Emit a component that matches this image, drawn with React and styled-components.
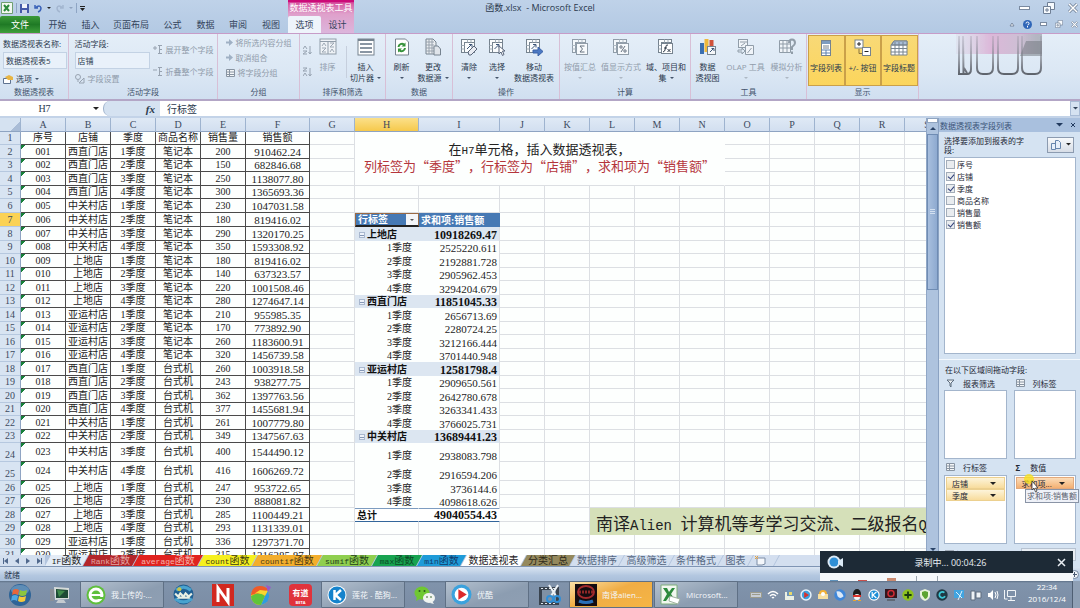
import React from 'react';
import styled, { createGlobalStyle, css } from 'styled-components';

const GlobalStyle = createGlobalStyle`
  * { box-sizing: border-box; }
  body {
    margin: 0;
    overflow: hidden;
    font-family: "Open Sans", "Noto Sans CJK SC", sans-serif;
    font-size: 8px;
    color: #2b3a4e;
  }
  button, input {
    font: inherit;
    color: inherit;
    padding: 0;
    margin: 0;
    border: 0;
    background: none;
  }
  svg { display: block; flex: none; }
`;

const songti = css`
  font-family: "Liberation Serif", "Noto Sans CJK SC", serif;
`;

const Page = styled.div`
  display: flex;
  flex-direction: column;
  height: 100vh;
  background: #d5e2f1;
`;

/* ---------- title bar and tabs ---------- */

const Header = styled.header`
  background: linear-gradient(#bfd2e9, #b3c9e3);
`;

const TopRow = styled.div`
  display: grid;
  grid-template-columns: 1fr auto 1fr;
  height: 33px;
`;

const TopLeft = styled.div`
  display: flex;
  flex-direction: column;
`;

const QuickBar = styled.div`
  display: flex;
  align-items: center;
  height: 16px;
  gap: 5px;
  padding-left: 1px;
`;

const QuickLine = styled.i`
  width: 1px;
  height: 10px;
  margin: 0 -2px;
  background: #8ea5c4;
`;

const TabRow = styled.nav`
  display: flex;
  height: 17px;
`;

const FileTab = styled.button`
  width: 40px;
  background: linear-gradient(#3c9a3a, #1f7a25 50%, #3f9f3c);
  border-radius: 2px 2px 0 0;
  color: #fff;
  font-size: 9px;
`;

const RibbonTab = styled.button`
  width: ${(p) => p.$w}px;
  font-size: 9px;
  line-height: 16px;
  color: #33435a;
`;

const ToolTabs = styled.div`
  display: flex;
  flex-direction: column;
  width: 66px;
  background: linear-gradient(#cf1280 0, #d65fa6 4px, #dfa0cb 14px, #dcb6dc);
  color: #fff;
  text-align: center;
`;

const ToolTitle = styled.div`
  height: 16px;
  border-top: 2px solid #cc0a78;
  line-height: 12px;
  font-size: 9px;
  white-space: nowrap;
`;

const ToolTab = styled(RibbonTab)`
  background: ${(p) => (p.$active ? '#eef4fb' : 'none')};
  border-radius: 2px 2px 0 0;
`;

const DocTitle = styled.h1`
  margin: 0;
  font-size: 9px;
  font-weight: 400;
  line-height: 16px;
`;

const TopRight = styled.div`
  display: flex;
  flex-direction: column;
  align-items: flex-end;
  padding-right: 2px;
`;

const WinRow = styled.div`
  display: flex;
  align-items: center;
  height: 16px;
  gap: ${(p) => p.$gap}px;
`;

/* ---------- ribbon ---------- */

const Ribbon = styled.div`
  display: flex;
  height: 68px;
  border-top: 1px solid #c79cc8;
  border-bottom: 2px solid #b3a6c6;
  background: linear-gradient(#e4eef8, #dbe7f4 60%, #d0dff0);
`;

const Group = styled.section`
  display: flex;
  flex-direction: column;
  flex: none;
  width: ${(p) => p.$w}px;
  border-right: 1px solid #d8bfd6;
`;

const GroupBody = styled.div`
  display: flex;
  flex: 1;
  justify-content: center;
  align-items: stretch;
  gap: ${(p) => p.$gap || 0}px;
`;

const GroupLabel = styled.div`
  height: 13px;
  line-height: 11px;
  text-align: center;
  color: #43546c;
`;

const BigButton = styled.button`
  display: flex;
  flex-direction: column;
  align-items: center;
  justify-content: flex-start;
  flex: none;
  width: ${(p) => p.$w}px;
  padding-top: 4px;
  height: 51px;
  line-height: 11px;
  white-space: nowrap;
  color: ${(p) => (p.$dim ? '#909cab' : '#2b3a4e')};
`;

const BigIcon = styled.span`
  margin-bottom: 5px;
  opacity: ${(p) => (p.$dim ? 0.75 : 1)};
`;

const BigLine = styled.span`
  display: flex;
  align-items: center;
  justify-content: center;
  gap: 3px;
  height: 11px;
`;

const ToggleButton = styled(BigButton)`
  margin-top: 1px;
  padding-top: 3px;
  background: linear-gradient(#f8d977, #fbd55c);
  border: 1px solid #caa049;
`;

const FieldColumn = styled.div`
  display: flex;
  flex-direction: column;
  width: ${(p) => p.$w}px;
  padding-left: 2px;
  padding-top: 3px;
`;

const FieldLabel = styled.label`
  line-height: 13px;
  white-space: nowrap;
`;

const FieldInput = styled.input`
  height: 17px;
  width: 100%;
  margin: 2px 0 3px;
  padding-left: 2px;
  background: #e9f1fa;
  border: 1px solid #c3d2e4;
`;

const SmallButton = styled.button`
  display: flex;
  align-items: center;
  gap: 3px;
  height: 13px;
  white-space: nowrap;
  color: ${(p) => (p.$dim ? '#909cab' : '#2b3a4e')};
`;

const SmallStack = styled.div`
  display: flex;
  flex-direction: column;
  padding-top: ${(p) => p.$top}px;
  gap: ${(p) => p.$gap}px;
`;

const Divider = styled.div`
  width: 1px;
  margin: 12px 2px 8px;
  background: #c6cfdd;
`;

const Smudge = styled.div`
  flex: 1;
  display: flex;
  justify-content: flex-end;
  padding-right: 34px;
`;

/* ---------- formula bar ---------- */

const FormulaBar = styled.div`
  display: flex;
  align-items: center;
  height: 17px;
  border-bottom: 2px solid #c3d3e8;
  background: #fff;
  ${songti}
  font-size: 10px;
`;

const NameBox = styled.div`
  display: flex;
  align-items: center;
  width: 103px;
  padding-right: 4px;
`;

const NameInput = styled.input`
  flex: 1;
  min-width: 0;
  text-align: center;
  padding-right: 4px;
`;

const FxArea = styled.div`
  display: flex;
  align-items: center;
  justify-content: flex-end;
  width: 57px;
  height: 15px;
  padding-right: 5px;
  border-left: 1px solid #9fb2cb;
  border-radius: 7px 0 0 7px;
  background: #d5e2f1;
  font-size: 11px;
  font-style: italic;
  font-weight: 700;
`;

const FormulaInput = styled.input`
  flex: 1;
  padding-left: 7px;
`;

const ExpandButton = styled.button`
  display: flex;
  align-items: center;
  justify-content: center;
  width: 10px;
  height: 15px;
  background: #d5e2f1;
  border: 1px solid #a9bcd6;
`;

/* ---------- sheet ---------- */

const Main = styled.main`
  display: flex;
  flex: 1;
  min-height: 0;
`;

const Book = styled.div`
  display: flex;
  flex-direction: column;
  flex: 1;
  min-width: 0;
`;

const SheetArea = styled.div`
  display: flex;
  flex: 1;
  min-height: 0;
`;

const SheetView = styled.div`
  flex: 1;
  min-width: 0;
  overflow: hidden;
  background: #fdfffe;
`;

const Grid = styled.table`
  width: 950px;
  table-layout: fixed;
  border-collapse: separate;
  border-spacing: 0;
  ${songti}
  font-size: 10px;
  line-height: 12px;
  color: #222;
  text-spacing-trim: space-all;
`;

const Row = styled.tr`
  height: ${(p) => p.$h}px;
`;

const ColHead = styled.th`
  padding: 0;
  height: 14px;
  font-weight: 400;
  color: #3c4a5e;
  border-right: 1px solid #9eb3cf;
  border-bottom: 1px solid #8ea4c2;
  background: ${(p) => (p.$on ? 'linear-gradient(#fbe08a, #f6c94c)' : 'linear-gradient(#dfe9f5, #d2dff0)')};
`;

const CornerHead = styled(ColHead)`
  background: linear-gradient(135deg, transparent 70%, #a9bcd6 70%) #d5e2f1;
`;

const RowHead = styled.th`
  padding: 0;
  font-weight: 400;
  vertical-align: bottom;
  color: #3c4a5e;
  border-right: 1px solid #8ea4c2;
  border-bottom: 1px solid #b6c8df;
  background: ${(p) => (p.$on ? '#fbd255' : '#d8e4f2')};
`;

const Cell = styled.td`
  padding: 0;
  border-right: 1px solid #dcdfe3;
  border-bottom: 1px solid #dcdfe3;
`;

const DataCell = styled.td`
  padding: 0;
  text-align: center;
  white-space: nowrap;
  font-size: ${(p) => (p.$money ? 11 : 10)}px;
  border-right: 1px solid #4a4a4a;
  border-bottom: 1px solid #4a4a4a;
  ${(p) => p.$flag && 'background: linear-gradient(135deg, #16803a 3px, transparent 3px);'}
`;

const PivotCell = styled.td`
  padding: 0 ${(p) => (p.$num ? 2 : 6)}px 0 2px;
  vertical-align: bottom;
  white-space: nowrap;
  text-align: ${(p) => (p.$num || p.$sub ? 'right' : 'left')};
  font-size: ${(p) => (p.$num ? 11 : 10)}px;
  border-right: 1px solid ${(p) => (p.$num ? '#dcdfe3' : 'transparent')};
  ${(p) => p.$bold && css`
    font-weight: 700;
    font-size: ${p.$num ? 12 : 10}px;
    color: #111;
    background: #dce6f1;
  `}
  ${(p) => p.$total && css`
    background: #fff;
    border-top: 1px solid #7d9cc0;
    border-bottom: 1px solid #33669b;
    border-right-color: transparent;
    line-height: 11px;
  `}
`;

const PivotHead = styled.td`
  padding: 0 0 0 2px;
  color: #fff;
  font-weight: 700;
  font-size: 10px;
  white-space: nowrap;
  background: #4679b4;
  border: ${(p) => (p.$active ? '1px solid #9a6a44' : '0')};
  border-bottom: ${(p) => (p.$active ? '2px solid #222' : '0')};
  line-height: 11px;
`;

const HeadInner = styled.div`
  display: flex;
  align-items: center;
  justify-content: space-between;
  height: 11px;
`;

const FilterButton = styled.button`
  display: flex;
  align-items: center;
  justify-content: center;
  width: 12px;
  height: 11px;
  background: #f4f6f9;
`;

const Collapse = styled.button`
  display: inline-flex;
  align-items: center;
  justify-content: center;
  width: 6px;
  height: 6px;
  margin: 0 2px 1px 2px;
  border: 1px solid #a9b8cf;
  vertical-align: middle;
  background: linear-gradient(#8497b5, #8497b5) center / 4px 1px no-repeat #eef3fa;
`;

const NoteCell = styled.td`
  padding: 0 0 4px;
  text-align: center;
  font-size: 13px;
  line-height: 17px;
  border-right: 1px solid #fdfffe;
  border-bottom: 1px solid #dcdfe3;
`;

const NoteLine = styled.div`
  color: ${(p) => (p.$red ? '#b5363c' : '#222')};
  font-family: "Noto Sans CJK SC", sans-serif;
`;

const BannerCell = styled.td`
  padding: 0 0 0 6px;
  vertical-align: bottom;
  background: #d5e0b9;
  font-size: 17px;
  line-height: 20px;
  white-space: nowrap;
`;

const Half = styled.span`
  font-family: "Liberation Mono", monospace;
  font-size: ${(p) => p.$size}px;
  line-height: 0;
`;

/* ---------- scroll bar ---------- */

const ScrollBar = styled.div`
  display: flex;
  flex-direction: column;
  width: 12px;
  background: #aec3de;
  border-left: 1px solid #90a7c6;
`;

const SplitBox = styled.div`
  height: 5px;
  background: #fff;
  border: 1px solid #8fa4c0;
`;

const ScrollButton = styled.button`
  display: flex;
  align-items: center;
  justify-content: center;
  height: 11px;
`;

const Thumb = styled.div`
  display: flex;
  align-items: center;
  justify-content: center;
  flex: 0 0 38%;
  border: 1px solid #6f8cb3;
  background: linear-gradient(90deg, #a8bfde, #8eaad0);
`;

const Track = styled.div`
  display: flex;
  flex-direction: column;
  flex: 1;
`;

/* ---------- sheet tabs and status ---------- */

const SheetTabs = styled.div`
  display: flex;
  height: 12px;
  border-bottom: 1px solid #7f95b4;
  background: #b3c5de;
  ${songti}
  font-size: 10px;
`;

const SheetNav = styled.div`
  display: flex;
  align-items: center;
  justify-content: space-around;
  width: 45px;
  background: #d3dfef;
`;

const SheetTab = styled.button`
  flex: none;
  width: ${(p) => p.$w + 5}px;
  margin-right: -5px;
  line-height: 11px;
  white-space: nowrap;
  color: ${(p) => p.$fg || '#56677f'};
  background: ${(p) => p.$bg};
  clip-path: polygon(6px 0, 100% 0, calc(100% - 6px) 100%, 0 100%);
`;

const TabSpace = styled.div`
  flex: 1;
  background: #d3dfef;
  clip-path: polygon(6px 0, 100% 0, 100% 100%, 0 100%);
`;

const StatusBar = styled.footer`
  display: flex;
  align-items: center;
  justify-content: space-between;
  height: 14px;
  padding: 0 1px 0 4px;
  background: linear-gradient(#dae5f2, #b3c7e0 60%, #a9bfda);
`;

/* ---------- field pane ---------- */

const Pane = styled.aside`
  display: flex;
  flex-direction: column;
  width: 142px;
  overflow: hidden;
  border-left: 1px solid #8ba2c2;
  background: #d5e3f2;
  color: #1e2835;
`;

const PaneTitle = styled.div`
  display: flex;
  align-items: center;
  gap: 7px;
  height: 14px;
  flex: none;
  padding: 0 4px 0 1px;
  background: #a9c0de;
  color: #3b5478;
  span { flex: 1; }
`;

const PaneHead = styled.div`
  display: flex;
  justify-content: space-between;
  align-items: center;
  height: 25px;
  flex: none;
  padding: 0 6px 0 5px;
  line-height: 9px;
  p { margin: 0; width: 86px; }
`;

const LayoutButton = styled.button`
  display: flex;
  align-items: center;
  justify-content: space-around;
  width: 27px;
  height: 16px;
  border: 1px solid #8c9bb0;
  background: linear-gradient(#f7f9fb, #d7dde6);
`;

const FieldList = styled.div`
  display: flex;
  flex-direction: column;
  height: 197px;
  flex: none;
  margin: 0 4px 0 5px;
  border: 1px solid #a3b5cc;
  background: #fff;
`;

const CheckLabel = styled.label`
  display: flex;
  align-items: center;
  gap: 2px;
  height: 12px;
  padding-left: 1px;
`;

const Check = styled.input`
  appearance: none;
  width: 9px;
  height: 9px;
  border: 1px solid #a3adb9;
  background: #e9ecef;
  &:checked::after {
    content: "";
    display: block;
    width: 3px;
    height: 5px;
    margin-left: 2px;
    border: solid #2f3f7a;
    border-width: 0 1px 1px 0;
    transform: rotate(40deg);
  }
`;

const AreaHint = styled.p`
  margin: 5px 0 0;
  padding: 4px 0 0 6px;
  line-height: 12px;
  border-top: 1px solid #f3f8fd;
`;

const Areas = styled.div`
  display: grid;
  grid-template-columns: 1fr 1fr;
  column-gap: 7px;
  padding: 0 4px 0 5px;
`;

const AreaTitle = styled.div`
  display: flex;
  align-items: center;
  gap: 8px;
  height: ${(p) => p.$h}px;
  padding-left: 2px;
`;

const AreaBox = styled.div`
  height: 69px;
  padding: 1px;
  border: 1px solid #a3b5cc;
  background: #fff;
`;

const Pill = styled.button`
  display: flex;
  align-items: center;
  justify-content: space-between;
  width: 100%;
  height: 12px;
  padding: 0 8px 0 5px;
  border: 1px solid ${(p) => (p.$hot ? '#e3a97c' : '#ecd08f')};
  background: ${(p) => (p.$hot ? 'linear-gradient(#fbdcb8, #f4b072)' : 'linear-gradient(#fdf4da, #f8dc9c)')};
`;

const PaneFoot = styled.div`
  display: flex;
  align-items: center;
  justify-content: space-between;
  padding: 4px 4px 0 5px;
`;

const UpdateButton = styled.button`
  width: 55px;
  height: 13px;
  border: 1px solid #b7c3d2;
  background: #e9eef4;
  color: #9aa6b4;
`;

const Tip = styled.div`
  position: fixed;
  right: 1px;
  top: 489px;
  padding: 0 1px;
  border: 1px solid #8a94a6;
  background: #eef1f8;
  color: #5c6270;
  line-height: 12px;
`;

const Pointer = styled.div`
  position: fixed;
  right: 41px;
  top: 473px;
`;

/* ---------- recorder window ---------- */

const Recorder = styled.div`
  position: fixed;
  right: 7px;
  bottom: 27px;
  width: 253px;
  background: #f4f7fa;
`;

const RecorderBar = styled.div`
  display: flex;
  align-items: center;
  justify-content: space-between;
  height: 22px;
  padding: 0 7px;
  background: #1d2a36;
  color: #e8edf2;
  font-size: 9px;
`;

const RecorderTools = styled.div`
  display: flex;
  align-items: flex-end;
  gap: 20px;
  height: 8px;
  padding-left: 10px;
`;

const ToolBit = styled.i`
  width: ${(p) => p.$w}px;
  height: ${(p) => p.$h}px;
  background: ${(p) => p.$c};
`;

/* ---------- task bar ---------- */

const TaskBar = styled.div`
  display: flex;
  height: 27px;
  background: linear-gradient(#5d7087 0, #8093ab 2px, #7b8da5);
`;

const Pin = styled.button`
  display: flex;
  align-items: center;
  justify-content: center;
  flex: none;
  width: ${(p) => p.$w}px;
`;

const Task = styled.button`
  display: flex;
  align-items: center;
  gap: 5px;
  flex: none;
  width: 84px;
  margin-right: ${(p) => p.$mr || 0}px;
  padding-left: 5px;
  color: #f4f7fa;
  white-space: nowrap;
  border: 1px solid #5f7085;
  border-radius: 1px;
  background: ${(p) => (p.$hot ? 'linear-gradient(160deg, #fbe0a6, #f0ad45 45%, #f5b545)' : 'linear-gradient(160deg, #b4c1cf, #8c9db1 60%, #8f9fb3)')};
`;

const Tray = styled.div`
  display: flex;
  align-items: center;
  justify-content: flex-end;
  flex: 1;
  gap: 5px;
  padding-right: 6px;
`;

const Clock = styled.time`
  width: 50px;
  text-align: center;
  font-size: 8px;
  line-height: 12px;
  color: #fff;
`;

const ShowDesktop = styled.button`
  width: 8px;
  border-left: 1px solid #4f5f73;
  background: #8fa0b5;
`;

/* ---------- drawings ---------- */

const Caret = ({ size = 6, color = '#222' }) => (
  <svg width={size} height={size / 2} viewBox="0 0 6 3"><path d="M0 0h6L3 3z" fill={color} /></svg>
);

const Glyph = ({ children, s = 18 }) => (
  <svg width={s} height={s} viewBox="0 0 18 18" fill="none" stroke="#76838f" strokeWidth="1">{children}</svg>
);

const PivotBase = () => (
  <>
    <rect x="1.5" y="1.5" width="13" height="13" fill="#fafcfd" />
    <path d="M4 4.500h10M4.500 4v10" stroke="#76838f" />
    <path d="M7.500 1.500v3M1.500 7.500h3M11 1.500v3M1.500 11h3" stroke="#a3aeb9" />
  </>
);

const icons = {
  sort: (
    <Glyph>
      <rect x="1" y="1" width="16" height="15" fill="#f4f6f8" />
      <path d="M1 3.500h16M9 4v12" />
      <path d="M3 8l2-3 2 3M3 10h4l-4 4h4M11 5h4l-4 4h4M11 14l2-3 2 3" stroke="#88939f" />
    </Glyph>
  ),
  slicer: (
    <Glyph>
      <rect x="1" y="1" width="16" height="16" fill="#fff" />
      <path d="M1 2h16" strokeWidth="2" />
      <path d="M3 6h12M3 10h12M3 14h12" stroke="#8a96a3" strokeWidth="2" />
    </Glyph>
  ),
  refresh: (
    <Glyph>
      <path d="M2.500 1h10l3 3v13h-13z" fill="#fff" />
      <path d="M5.500 9a3.500 3.500 0 0 1 5.500-2.500M12 10a3.500 3.500 0 0 1-5.500 2.500" stroke="#35923a" strokeWidth="2" />
      <path d="M12.500 4.500v4h-4zM5 14.500v-4h4z" fill="#35923a" stroke="none" />
    </Glyph>
  ),
  source: (
    <Glyph>
      <path d="M2 1h7l3 3v12H2z" fill="#eceff2" />
      <path d="M2 4h8M2 7h8M2 10h8M2 13h8M5 1v15M8 1v15" stroke="#98a2ad" />
      <path d="M10 8h4l2.500 3v6H10z" fill="#dfe4ea" />
    </Glyph>
  ),
  clear: (
    <Glyph>
      <PivotBase />
      <path d="M7 11l4-4M9 6.500h3v3" stroke="#3c5578" />
      <path d="M8 14l6-6 3 3-6 6H9z" fill="#e8ebf2" stroke="#59657a" />
    </Glyph>
  ),
  select: (
    <Glyph>
      <PivotBase />
      <path d="M6.500 11l4-4M8 6.500h3v3" stroke="#3c5578" />
      <path d="M11 8v8l2-2 1.500 3.500 1.500-1L14.500 13H17z" fill="#fff" stroke="#59657a" />
    </Glyph>
  ),
  move: (
    <Glyph>
      <PivotBase />
      <path d="M6.500 11l4-4M8 6.500h3v3" stroke="#3c5578" />
      <path d="M8 12h5V9l5 4.500-5 4.500v-3H8z" fill="#4c79c4" stroke="#3a62a6" />
    </Glyph>
  ),
  sum: (
    <Glyph>
      <PivotBase />
      <rect x="5.500" y="5.500" width="11" height="11" fill="#fff" />
      <path d="M13.500 8H9l2.500 3L9 14h4.500" stroke="#3d4856" />
    </Glyph>
  ),
  percent: (
    <Glyph>
      <PivotBase />
      <rect x="5.500" y="5.500" width="11" height="11" fill="#fff" />
      <path d="M13 8l-4 6" stroke="#3d4856" />
      <circle cx="9" cy="9" r="1.200" stroke="#3d4856" />
      <circle cx="13" cy="13" r="1.200" stroke="#3d4856" />
    </Glyph>
  ),
  fields: (
    <Glyph>
      <PivotBase />
      <rect x="4.500" y="5.500" width="11" height="10" fill="#fff" />
      <path d="M6 14q2 0 2.500-4T11 7M7 10h3M10.500 11l3 3M13.500 11l-3 3" stroke="#2f3a48" />
    </Glyph>
  ),
  chart: (
    <Glyph>
      <rect x="1" y="5" width="4" height="11" fill="#3b6fb0" stroke="none" />
      <rect x="5.500" y="1" width="4" height="13" fill="#eeb83c" stroke="none" />
      <rect x="10.500" y="2" width="4" height="9" fill="#d0513a" stroke="none" />
      <rect x="8.500" y="8.500" width="8" height="8" fill="#f6f8fa" />
      <path d="M11 14l3-3M12.500 10.500H15V13" stroke="#3c5578" />
    </Glyph>
  ),
  olap: (
    <Glyph>
      <rect x="1.500" y="1.500" width="9" height="8" fill="#f6f8fa" />
      <path d="M3 4h7M4 8l4-3" />
      <path d="M8.500 7.500h8v9h-8z" fill="#f6f8fa" />
      <path d="M1 12h4v-2l3 3-3 3v-2H1zM10.500 15l4-5" />
    </Glyph>
  ),
  whatif: (
    <Glyph>
      <path d="M1.500 2.500h11v12h-11z" fill="#f6f8fa" />
      <path d="M1.500 6h11M1.500 10h11M5 2.500v12M9 2.500v12" />
      <path d="M11 5q0-3.500 3-3.500T17 5q0 2-3 4v3M14 13.500v2.500" strokeWidth="2" />
    </Glyph>
  ),
  list: (
    <Glyph>
      <rect x="4.500" y="1.500" width="9" height="15" fill="#fff" />
      <rect x="5" y="2" width="8" height="3" fill="#7d9cc0" stroke="none" />
      <path d="M6 7h6M6 9h6" />
      <path d="M4.500 11h9M9 11v6M4.500 14h9" stroke="#5c81b0" />
    </Glyph>
  ),
  plusminus: (
    <Glyph>
      <rect x="1" y="1" width="8" height="8" fill="#fff" />
      <path d="M3 5h4M5 3v4" stroke="#222" />
      <rect x="8.500" y="8.500" width="8" height="8" fill="#fff" />
      <path d="M10.500 12.500h4" stroke="#222" />
      <path d="M5 10v4.500H8" stroke="#8a7440" />
    </Glyph>
  ),
  headers: (
    <Glyph>
      <path d="M1 6l3-4h13v14H1z" fill="#fff" />
      <path d="M4 2h13v4H1.500z" fill="#a9bdd6" />
      <path d="M1 6h16M1 9.500h16M1 13h16M5 3v13M9 3v13M13 3v13" />
    </Glyph>
  ),
  expand: (
    <svg width="10" height="9" viewBox="0 0 10 9" fill="none" stroke="#98a3b1"><path d="M0 3h4M2 1v4M5 .5h4M6.500.5v8M5 8.500h4M7 4.500h2" /></svg>
  ),
  fold: (
    <svg width="10" height="9" viewBox="0 0 10 9" fill="none" stroke="#98a3b1"><path d="M0 3h4M5 .5h4M6.500.5v8M5 8.500h4M7 4.500h2" /></svg>
  ),
  setting: (
    <svg width="10" height="10" viewBox="0 0 10 10" fill="none" stroke="#98a3b1"><circle cx="3" cy="3" r="2.500" /><path d="M4 9h5V4zM2 7h2" /></svg>
  ),
  arrow: (
    <svg width="7" height="7" viewBox="0 0 7 7" fill="#9fb0c4"><path d="M0 2.500h3V0l4 3.500L3 7V4.500H0z" /></svg>
  ),
  card: (
    <svg width="10" height="10" viewBox="0 0 10 10"><path d="M.5 4.500h7v5h-7z" fill="#fff" stroke="#5f7390" /><path d="M2 3l4-2 4 2v3H5z" fill="#e8b543" /></svg>
  ),
  table: (
    <svg width="9" height="8" viewBox="0 0 9 8" fill="#f4f6f8" stroke="#8894a2"><path d="M.5.500h8v7h-8zM.5 3h8M.5 5.500h8M3.500.500v7" /></svg>
  ),
};

const Restore = ({ s }) => (
  <svg width={s} height={s} viewBox="0 0 12 12" fill="#f7fafd" stroke="#6f7f95"><path d="M4.500.500h7v7h-7z" /><path d="M.5 4.500h7v7h-7zM3 7h2v2H3z" /></svg>
);

const Close = ({ s, color = '#6f7f95' }) => (
  <svg width={s} height={s} viewBox="0 0 10 10"><path d="M1 1l8 8M9 1L1 9" stroke={color} strokeWidth="3" /><path d="M1 1l8 8M9 1L1 9" stroke="#fff" strokeWidth="1.500" /></svg>
);

const Dash = ({ w }) => (
  <svg width={w} height="4" viewBox={`0 0 ${w} 4`}><rect x=".5" y=".5" width={w - 1} height="3" fill="#fff" stroke="#7a8aa0" /></svg>
);

const SortPair = ({ up }) => (
  <svg width="9" height="10" viewBox="0 0 9 10" fill="none" stroke="#97a3b1">
    <path d={up ? 'M0 4l2-3 2 3M0 6h4L0 9h4' : 'M0 1h4L0 4h4M0 9l2-3 2 3'} />
    <path d="M7 1v8M5.500 7L7 9l1.500-2" />
  </svg>
);

const Ball = ({ s = 18, fill, children }) => (
  <svg width={s} height={s} viewBox="0 0 20 20"><circle cx="10" cy="10" r="9.500" fill={fill} />{children}</svg>
);

/* ---------- data ---------- */

const shops = ['西直门店', '中关村店', '上地店', '亚运村店'];
const amounts = [
  [200, '910462.24'], [150, '682846.68'], [250, '1138077.80'], [300, '1365693.36'],
  [230, '1047031.58'], [180, '819416.02'], [290, '1320170.25'], [350, '1593308.92'],
  [180, '819416.02'], [140, '637323.57'], [220, '1001508.46'], [280, '1274647.14'],
  [210, '955985.35'], [170, '773892.90'], [260, '1183600.91'], [320, '1456739.58'],
  [260, '1003918.58'], [243, '938277.75'], [362, '1397763.56'], [377, '1455681.94'],
  [261, '1007779.80'], [349, '1347567.63'], [400, '1544490.12'], [416, '1606269.72'],
  [247, '953722.65'], [230, '888081.82'], [285, '1100449.21'], [293, '1131339.01'],
  [336, '1297371.70'], [315, '1216285.87'],
];

const sales = amounts.map(([count, money], i) => [
  String(i + 1).padStart(3, '0'),
  shops[Math.floor(i / 4) % 4],
  `${(i % 4) + 1}季度`,
  i < 16 ? '笔记本' : '台式机',
  count,
  money,
]);

const pivot = [
  ['上地店', '10918269.47', ['2525220.611', '2192881.728', '2905962.453', '3294204.679']],
  ['西直门店', '11851045.33', ['2656713.69', '2280724.25', '3212166.444', '3701440.948']],
  ['亚运村店', '12581798.4', ['2909650.561', '2642780.678', '3263341.433', '3766025.731']],
  ['中关村店', '13689441.23', ['2938083.798', '2916594.206', '3736144.6', '4098618.626']],
];

const pivotRows = pivot.flatMap(([name, total, quarters]) => [
  { label: name, value: total, bold: true },
  ...quarters.map((value, i) => ({ label: `${i + 1}季度`, value })),
]);

const columns = [
  ['A', 45], ['B', 45], ['C', 45], ['D', 45], ['E', 45], ['F', 64], ['G', 45], ['H', 64], ['I', 81],
  ['J', 45], ['K', 45], ['L', 45], ['M', 45], ['N', 45], ['O', 45], ['P', 45], ['Q', 45], ['R', 45], ['S', 45],
];

const sheets = [
  ['IF函数', 38, '#e3ecf6', '#222'],
  ['Rank函数', 50, '#b3262b', '#e3a6a2'],
  ['average函数', 65, '#e0231f', '#f3b3aa'],
  ['count函数', 54, '#f6f01f', '#3a3a14'],
  ['countif函数', 65, '#f3ae2c', '#4a3a14'],
  ['sumif函数', 55, '#8fcf4f', '#23401a'],
  ['max函数', 45, '#17a350', '#0c4a26'],
  ['min函数', 44, '#1d9bd8', '#123a6a'],
  ['数据透视表', 60, '#fff', '#222'],
  ['分类汇总', 49, '#94895d', '#2e2a1a'],
  ['数据排序', 49, '#d3dfef'],
  ['高级筛选', 50, '#d3dfef'],
  ['条件格式', 49, '#d3dfef'],
  ['图表', 30, '#d3dfef'],
];

const Mixed = ({ text, size }) =>
  text.split(/([\x20-\x7f]+)/).map((part, i) =>
    (i % 2 ? <Half key={i} $size={size}>{part}</Half> : part));

const rowHeight = (n) => (n === 24 || n === 25 ? 19 : n % 2 === 0 ? 14 : 13);

const blanks = (n) => Array.from({ length: n }, (_, i) => <Cell key={i} />);

const PivotPart = ({ n }) => {
  if (n === 1) {
    return (
      <NoteCell colSpan={7} rowSpan={4}>
        <NoteLine><Mixed text="在H7单元格，插入数据透视表，" size={11} /></NoteLine>
        <NoteLine $red>列标签为“季度”，行标签为“店铺”，求和项为“销售额”</NoteLine>
      </NoteCell>
    );
  }
  if (n < 5) return null;
  if (n === 7) {
    return (
      <>
        <PivotHead $active>
          <HeadInner>行标签<FilterButton aria-label="筛选"><Caret size={4} color="#555" /></FilterButton></HeadInner>
        </PivotHead>
        <PivotHead>求和项:销售额</PivotHead>
      </>
    );
  }
  if (n > 7 && n < 28) {
    const row = pivotRows[n - 8];
    return (
      <>
        <PivotCell $bold={row.bold} $sub={!row.bold}>
          {row.bold && <Collapse aria-label="折叠" />}
          {row.label}
        </PivotCell>
        <PivotCell $num $bold={row.bold}>{row.value}</PivotCell>
      </>
    );
  }
  if (n === 28) {
    return (
      <>
        <PivotCell $bold $total>总计</PivotCell>
        <PivotCell $num $bold $total>49040554.43</PivotCell>
      </>
    );
  }
  return blanks(2);
};

const RestPart = ({ n }) => {
  if (n < 5) return blanks(5);
  if (n === 28) {
    return (
      <>
        {blanks(2)}
        <BannerCell colSpan={8} rowSpan={2}>
          <Mixed text="南译Alien 计算机等考学习交流、二级报名Q" size={14} />
        </BannerCell>
      </>
    );
  }
  return blanks(n === 29 ? 2 : 10);
};

const Sheet = () => (
  <Grid>
    <colgroup>
      <col style={{ width: 21 }} />
      {columns.map(([name, width]) => <col key={name} style={{ width }} />)}
    </colgroup>
    <thead>
      <Row $h={14}>
        <CornerHead />
        {columns.map(([name]) => <ColHead key={name} scope="col" $on={name === 'H'}>{name}</ColHead>)}
      </Row>
    </thead>
    <tbody>
      {Array.from({ length: 31 }, (_, i) => i + 1).map((n) => {
        const cells = n === 1 ? ['序号', '店铺', '季度', '商品名称', '销售量', '销售额'] : sales[n - 2];
        return (
          <Row key={n} $h={rowHeight(n)}>
            <RowHead scope="row" $on={n === 7}>{n}</RowHead>
            {cells.map((text, c) => (
              <DataCell key={c} $flag={n > 1 && c === 0} $money={n > 1 && c === 5}>{text}</DataCell>
            ))}
            <Cell />
            <PivotPart n={n} />
            <RestPart n={n} />
          </Row>
        );
      })}
    </tbody>
  </Grid>
);

const Big = ({ icon, w, lines, dim, toggle, menu }) => {
  const Button = toggle ? ToggleButton : BigButton;
  const caret = <Caret size={4} color={dim ? '#aeb8c4' : '#44546a'} />;
  return (
    <Button $w={w} $dim={dim}>
      <BigIcon $dim={dim}>{icons[icon]}</BigIcon>
      {lines.map((line, i) => (
        <BigLine key={line}>{line}{menu && i === 1 && caret}</BigLine>
      ))}
      {menu && lines.length === 1 && <BigLine>{caret}</BigLine>}
    </Button>
  );
};

const RibbonGroup = ({ title, w, gap, children }) => (
  <Group $w={w}>
    <GroupBody $gap={gap}>{children}</GroupBody>
    <GroupLabel>{title}</GroupLabel>
  </Group>
);

const RibbonBar = () => (
  <Ribbon>
    <RibbonGroup title="数据透视表" w={69}>
      <FieldColumn $w={66}>
        <FieldLabel htmlFor="pivot-name">数据透视表名称:</FieldLabel>
        <FieldInput id="pivot-name" defaultValue="数据透视表5" />
        <SmallButton>{icons.card}选项<Caret size={4} color="#44546a" /></SmallButton>
      </FieldColumn>
    </RibbonGroup>
    <RibbonGroup title="活动字段" w={149} gap={3}>
      <FieldColumn $w={77}>
        <FieldLabel htmlFor="active-field">活动字段:</FieldLabel>
        <FieldInput id="active-field" defaultValue="店铺" />
        <SmallButton $dim>{icons.setting}字段设置</SmallButton>
      </FieldColumn>
      <SmallStack $top={9} $gap={9}>
        <SmallButton $dim>{icons.expand}展开整个字段</SmallButton>
        <SmallButton $dim>{icons.fold}折叠整个字段</SmallButton>
      </SmallStack>
    </RibbonGroup>
    <RibbonGroup title="分组" w={82}>
      <SmallStack $top={2} $gap={2}>
        <SmallButton $dim>{icons.arrow}将所选内容分组</SmallButton>
        <SmallButton $dim>{icons.arrow}取消组合</SmallButton>
        <SmallButton $dim>{icons.table}将字段分组</SmallButton>
      </SmallStack>
    </RibbonGroup>
    <RibbonGroup title="排序和筛选" w={86}>
      <SmallStack $top={9} $gap={9}>
        <SmallButton aria-label="升序"><SortPair up /></SmallButton>
        <SmallButton aria-label="降序"><SortPair /></SmallButton>
      </SmallStack>
      <Big icon="sort" w={32} lines={['排序']} dim />
      <Divider />
      <Big icon="slicer" w={34} lines={['插入', '切片器']} menu />
    </RibbonGroup>
    <RibbonGroup title="数据" w={67}>
      <Big icon="refresh" w={28} lines={['刷新']} menu />
      <Big icon="source" w={35} lines={['更改', '数据源']} menu />
    </RibbonGroup>
    <RibbonGroup title="操作" w={107}>
      <Big icon="clear" w={28} lines={['清除']} menu />
      <Big icon="select" w={28} lines={['选择']} menu />
      <Big icon="move" w={46} lines={['移动', '数据透视表']} />
    </RibbonGroup>
    <RibbonGroup title="计算" w={131}>
      <Big icon="sum" w={38} lines={['按值汇总']} dim menu />
      <Big icon="percent" w={44} lines={['值显示方式']} dim menu />
      <Big icon="fields" w={46} lines={['域、项目和', '集']} menu />
    </RibbonGroup>
    <RibbonGroup title="工具" w={116}>
      <Big icon="chart" w={30} lines={['数据', '透视图']} />
      <Big icon="olap" w={46} lines={['OLAP 工具']} dim menu />
      <Big icon="whatif" w={36} lines={['模拟分析']} dim menu />
    </RibbonGroup>
    <RibbonGroup title="显示" w={112}>
      <Big icon="list" w={37} lines={['字段列表']} toggle />
      <Big icon="plusminus" w={36} lines={['+/- 按钮']} toggle />
      <Big icon="headers" w={37} lines={['字段标题']} toggle />
    </RibbonGroup>
    <Smudge>
      <svg width="96" height="46" viewBox="0 0 96 46">
        <defs>
          <linearGradient id="haze" x1="0" x2="1">
            <stop offset="0" stopColor="#d9cfe0" stopOpacity=".3" />
            <stop offset=".4" stopColor="#dcb8d9" />
            <stop offset=".75" stopColor="#cdbfd4" />
            <stop offset="1" stopColor="#9a9ea8" stopOpacity=".7" />
          </linearGradient>
          <linearGradient id="ink" gradientUnits="userSpaceOnUse" x1="0" y1="0" x2="0" y2="42">
            <stop offset="0" stopColor="#8d8a98" stopOpacity=".2" />
            <stop offset=".6" stopColor="#7c8089" stopOpacity=".7" />
            <stop offset="1" stopColor="#565b64" />
          </linearGradient>
          <filter id="soft"><feGaussianBlur stdDeviation=".7" /></filter>
        </defs>
        <rect x="6" y="-2" width="86" height="22" fill="url(#haze)" filter="url(#soft)" />
        <path d="M76 7h16v15H70z" fill="#70747c" opacity=".5" filter="url(#soft)" />
        <path d="M2 21h24" stroke="#6f757f" strokeWidth="3" filter="url(#soft)" />
        <g fill="none" stroke="url(#ink)" strokeWidth="2" filter="url(#soft)">
          <path d="M9 2v38h8q4 0 4-5V2M13 2l.5 38M14 34l3 5" />
          <path d="M27 2v32q0 6 6 6h4q6 0 6-6V2M48 2v32q0 6 6 6h8q6 0 6-6V2M72 2v32q0 6 6 6h7q6 0 6-6V2" />
        </g>
      </svg>
    </Smudge>
  </Ribbon>
);

const fieldNames = ['序号', '店铺', '季度', '商品名称', '销售量', '销售额'];
const picked = ['店铺', '季度', '销售额'];

const FieldPane = () => (
  <Pane>
    <PaneTitle>
      <span>数据透视表字段列表</span>
      <Caret size={7} color="#223a5e" />
      <svg width="6" height="6" viewBox="0 0 6 6"><path d="M1 1l4 4M5 1L1 5" stroke="#223a5e" /></svg>
    </PaneTitle>
    <PaneHead>
      <p>选择要添加到报表的字段:</p>
      <LayoutButton aria-label="布局">
        <svg width="10" height="10" viewBox="0 0 10 10" fill="#e7effa" stroke="#6685ad"><path d="M.5 3.500h4v6h-4zM4.500.500h3l2 2v6h-5z" /></svg>
        <Caret size={5} />
      </LayoutButton>
    </PaneHead>
    <FieldList>
      {fieldNames.map((name) => (
        <CheckLabel key={name}>
          <Check type="checkbox" defaultChecked={picked.includes(name)} />
          {name}
        </CheckLabel>
      ))}
    </FieldList>
    <AreaHint>在以下区域间拖动字段:</AreaHint>
    <Areas>
      <AreaTitle $h={14}>
        <svg width="9" height="8" viewBox="0 0 9 8"><path d="M1 1h7L5 4v4L4 7V4z" fill="#eef2f6" stroke="#5d6c7d" /></svg>
        报表筛选
      </AreaTitle>
      <AreaTitle $h={14}>{icons.table}列标签</AreaTitle>
      <AreaBox />
      <AreaBox />
      <AreaTitle $h={16}>{icons.table}行标签</AreaTitle>
      <AreaTitle $h={16}><b>Σ</b>&nbsp;数值</AreaTitle>
      <AreaBox>
        <Pill>店铺<Caret size={6} /></Pill>
        <Pill>季度<Caret size={6} /></Pill>
      </AreaBox>
      <AreaBox>
        <Pill $hot>求和项...<Caret size={6} /></Pill>
      </AreaBox>
    </Areas>
    <PaneFoot>
      <CheckLabel><Check type="checkbox" />推迟布局更新</CheckLabel>
      <UpdateButton>更新</UpdateButton>
    </PaneFoot>
  </Pane>
);

const NavArrow = ({ flip, end }) => (
  <svg width="6" height="6" viewBox="0 0 6 6" fill="#50688c">
    <path d={flip ? 'M1 0l4 3-4 3z' : 'M5 0L1 3l4 3z'} />
    {end && <path d={flip ? 'M5 0h1v6H5z' : 'M0 0h1v6H0z'} />}
  </svg>
);

const Wechat = () => (
  <svg width="22" height="18" viewBox="0 0 22 18">
    <ellipse cx="8" cy="7" rx="7.500" ry="6.500" fill="#6fc832" />
    <path d="M3 11l-1 4 4-2z" fill="#6fc832" />
    <ellipse cx="15" cy="12" rx="6" ry="5" fill="#f1f4f1" />
    <path d="M18 15l2 3-4-1z" fill="#f1f4f1" />
    <g fill="#2c5a1c"><circle cx="5.500" cy="5" r="1" /><circle cx="10.500" cy="5" r="1" /><circle cx="13" cy="11" r=".8" /><circle cx="17" cy="11" r=".8" /></g>
  </svg>
);

const tray = [
  <svg key="kb" width="12" height="6" viewBox="0 0 12 6"><path d="M.5.500h11v5H.5zM2 2.500h8" fill="#c7ced6" stroke="#9c9c8c" /></svg>,
  <svg key="wifi" width="12" height="12" viewBox="0 0 12 12" fill="none" stroke="#fff"><path d="M1 5q5-5 10 0M3 7q3-3 6 0M5 9q1-1 2 0" strokeWidth="1.500" /></svg>,
  <svg key="note" width="11" height="12" viewBox="0 0 11 12"><path d="M1 3h9v8H1z" fill="#eaf0e4" /><path d="M3 1h7v6H3z" fill="#6f96b8" /><path d="M5 3h3v3H5z" fill="#e9d86a" /></svg>,
  <Ball key="youku" s={12} fill="#e8f2fa"><circle cx="10" cy="10" r="7" fill="#3fa0dd" /><path d="M7 5l8 5-8 5z" fill="#d8312d" /></Ball>,
  <svg key="folder" width="12" height="12" viewBox="0 0 12 12"><circle cx="6" cy="5" r="4" fill="#f3b136" /><path d="M1 5h10v5H1z" fill="#f7dfa0" /><circle cx="6" cy="5" r="2" fill="#fff" /></svg>,
  <Ball key="blue" s={12} fill="#3f86d8"><path d="M4 4q8-2 12 8q-6 6-10 0z" fill="#dbe9f8" /></Ball>,
  <svg key="qq" width="12" height="12" viewBox="0 0 12 12"><ellipse cx="6" cy="5" rx="4" ry="5" fill="#1c1c1c" /><ellipse cx="6" cy="8" rx="3" ry="3" fill="#f4f4f4" /><path d="M2 6h8v2H2z" fill="#d9302a" /><path d="M2 11h3v1H2zM7 11h3v1H7z" fill="#eda52c" /></svg>,
  <Ball key="k" s={12} fill="#fff"><circle cx="10" cy="10" r="7.500" fill="#1e8fd6" /><path d="M7 5v10M14 5l-6 5 6 5" stroke="#fff" strokeWidth="2" fill="none" /></Ball>,
  <svg key="rec" width="12" height="12" viewBox="0 0 12 12"><path d="M0 0h12v9H0z" fill="#33161c" /><circle cx="6" cy="4.500" r="3" fill="none" stroke="#cf2b34" strokeWidth="1.500" /><path d="M2 11h8" stroke="#444" /></svg>,
  <Ball key="plus" s={12} fill="#8ec21f"><path d="M10 4v12M4 10h12" stroke="#183a10" strokeWidth="3" /></Ball>,
  <svg key="shield" width="12" height="12" viewBox="0 0 12 12"><path d="M6 0l5 2v4q0 4-5 6Q1 10 1 6V2z" fill="#e6f2da" /><path d="M6 2l3 1v3q0 3-3 4L3 6V3z" fill="#5ba431" /></svg>,
  <Ball key="dark" s={12} fill="#203844"><path d="M14 6a5 5 0 1 0 1 6" stroke="#3cc7d6" strokeWidth="3" fill="none" /></Ball>,
  <svg key="net" width="12" height="12" viewBox="0 0 12 12"><path d="M1 1h10v8H1z" fill="#41a4e0" /><path d="M3 3l6 6M9 2L5 11" stroke="#dff1fb" /></svg>,
  <svg key="usb" width="12" height="12" viewBox="0 0 12 12" fill="#eef2f6" stroke="#5f6d7e"><path d="M1 2h4v9H1zM6 3h5v6H6z" /></svg>,
  <svg key="vol" width="12" height="12" viewBox="0 0 12 12" fill="#fff"><path d="M1 4h2l3-3v10L3 8H1z" /><path d="M8 3q2 3 0 6M10 2q2 4 0 8" stroke="#fff" fill="none" /></svg>,
  <svg key="lan" width="12" height="12" viewBox="0 0 12 12" fill="none" stroke="#f2f5f8"><path d="M3.500 1.500h8v6h-8zM7 8v3M4 11.500h7M.5 1v9h3" /></svg>,
];

const Tasks = () => (
  <TaskBar>
    <Pin $w={39} aria-label="开始">
      <svg width="24" height="24" viewBox="0 0 24 24">
        <circle cx="12" cy="12" r="11" fill="#2f6497" />
        <ellipse cx="12" cy="7" rx="9" ry="5" fill="#7fa9cc" opacity=".6" />
        <path d="M5 7q3-2 6 0l-1 5q-3-2-6 0z" fill="#e8663a" />
        <path d="M12 7q3 2 7 0l-1 5q-4 2-7 0z" fill="#8cc63e" />
        <path d="M4 13q3-2 6 0l-1 5q-3-2-6 0z" fill="#4fa9e4" />
        <path d="M11 13q3 2 7 0l-1 5q-4 2-7 0z" fill="#f5c83b" />
      </svg>
    </Pin>
    <Pin $w={41} aria-label="计算机">
      <svg width="22" height="20" viewBox="0 0 22 20"><path d="M1 4h4v12H1z" fill="#8a9098" /><path d="M5 2l15 1v11L6 15z" fill="#d6dbd9" /><path d="M7 4l12 1v8L7 13z" fill="#1e4a35" /><path d="M8 5l8 1-6 6z" fill="#3f8a4a" /><path d="M9 15h6l2 3H7z" fill="#c5cbd0" /></svg>
    </Pin>
    <Task>
      <Ball s={20} fill="#5fbf3c"><circle cx="10" cy="10" r="6" fill="none" stroke="#fff" strokeWidth="3" /><path d="M5 9h11v2H5z" fill="#fff" /><path d="M12 12h6v2h-6z" fill="#5fbf3c" /></Ball>
      我上传的-...
    </Task>
    <Pin $w={39} aria-label="游戏">
      <Ball s={21} fill="#1f5f93"><path d="M3 6q7-6 14 0M2 14q8 6 16 0" stroke="#49a3cf" strokeWidth="3" fill="none" /><path d="M2 9l3 3 2-3 3 3 2-3 3 3 3-3M4 13h12" stroke="#e9f0e4" strokeWidth="2" fill="none" /><circle cx="6" cy="5" r="2" fill="#c5c24a" /></Ball>
    </Pin>
    <Pin $w={39} aria-label="笔记">
      <svg width="22" height="22" viewBox="0 0 22 22"><path d="M0 0h22v22H0z" fill="#d2281f" /><path d="M6 18V4l10 14V4" fill="none" stroke="#fff" strokeWidth="3" /></svg>
    </Pin>
    <Pin $w={38} aria-label="浏览器">
      <svg width="22" height="22" viewBox="0 0 22 22"><circle cx="10" cy="12" r="9" fill="#f6c821" /><path d="M1 11q1-9 9-9 6 0 8 4L8 10z" fill="#ef5a28" /><path d="M1 12q9-5 14 0l-4 9Q2 21 1 12z" fill="#5fc43a" /><path d="M1 12q5-5 14-1l3-4-8-1z" fill="#f9d62f" /><path d="M11 21l4-9 3-5q4 11-7 14z" fill="#2f9be0" /><path d="M16 1l5 2-3 5z" fill="#9b59c9" /></svg>
    </Pin>
    <Pin $w={41} aria-label="有道">
      <svg width="23" height="22" viewBox="0 0 23 22">
        <rect width="23" height="22" rx="4" fill="#e0333c" />
        <text x="11.500" y="12" fontSize="8" fontWeight="700" textAnchor="middle" fill="#fff">有道</text>
        <text x="11.500" y="20" fontSize="4" fontWeight="700" textAnchor="middle" fill="#fff">BETA</text>
      </svg>
    </Pin>
    <Task>
      <Ball s={20} fill="#fff"><circle cx="10" cy="10" r="8.500" fill="#1583cc" /><path d="M7.500 5v10M14 5l-5.500 5 5.500 5" stroke="#fff" strokeWidth="2.500" fill="none" /></Ball>
      莲花 - 酷狗...
    </Task>
    <Pin $w={40} aria-label="微信"><Wechat /></Pin>
    <Task>
      <Ball s={21} fill="#3ba2dd"><circle cx="10" cy="10" r="6.500" fill="#fff" /><path d="M7 5l8 5-8 5z" fill="#dc2a2c" /></Ball>
      优酷
    </Task>
    <Pin $w={40} aria-label="截图">
      <svg width="23" height="22" viewBox="0 0 23 22"><path d="M1 3h20v18H1z" fill="#39434f" /><path d="M4 6h14v12H4z" fill="#7f91a4" /><path d="M3 4.500h16M3 19.500h16" stroke="#dfe6ec" strokeDasharray="2 2" /><path d="M20 1l-7 11M11 1l7 11" stroke="#eef3f7" strokeWidth="2" /><circle cx="12" cy="15" r="3" fill="none" stroke="#2f8fd8" strokeWidth="2" /><circle cx="19" cy="15" r="3" fill="none" stroke="#2f8fd8" strokeWidth="2" /></svg>
    </Pin>
    <Task $hot $mr={1}>
      <svg width="22" height="22" viewBox="0 0 22 22"><path d="M0 0h22v22H0z" fill="#140c10" /><ellipse cx="11" cy="8" rx="8" ry="6" fill="none" stroke="#a32a2c" strokeWidth="2" /><path d="M4 8h14" stroke="#8c2626" strokeWidth="3" strokeDasharray="2 1" /><path d="M4 17q7 3 14 0" stroke="#2a6fb8" strokeWidth="3" fill="none" /></svg>
      南译alien...
    </Task>
    <Task>
      <svg width="21" height="21" viewBox="0 0 21 21"><path d="M1 1h16v19H1z" fill="#f1f7ef" stroke="#7fae7c" /><path d="M3 4h4l2 4 3-4h3l-4 6 5 7h-4l-3-4-3 4H3l4-7z" fill="#2c8a3c" /><path d="M10 12l10 3-2 5-9-3z" fill="#fff" stroke="#9fb3a0" /></svg>
      Microsoft...
    </Task>
    <Tray>{tray}</Tray>
    <Clock>22:34<br />2016/12/4</Clock>
    <ShowDesktop aria-label="显示桌面" />
  </TaskBar>
);

const App = () => (
  <>
    <GlobalStyle />
    <Page>
      <Header>
        <TopRow>
          <TopLeft>
            <QuickBar>
              <svg width="12" height="12" viewBox="0 0 12 12"><path d="M.5.500h11v11H.5z" fill="#f3f9f1" stroke="#6fa070" /><path d="M3 3l5 6M8 3L3 9" stroke="#2c8a3c" strokeWidth="2" /></svg>
              <QuickLine />
              <svg width="9" height="9" viewBox="0 0 9 9"><path d="M0 0h9v9H0z" fill="#4459a8" /><path d="M2 0h5v4H2z" fill="#f0f3fa" /><path d="M2 6h5v3H2z" fill="#cdd5ea" /></svg>
              <svg width="8" height="9" viewBox="0 0 8 9" fill="none" stroke="#3a62b8" strokeWidth="1.500"><path d="M1 1v3h3M1 4q5-4 6 0 0 3-3 4" /></svg>
              <Caret size={4} />
              <svg width="8" height="9" viewBox="0 0 8 9" fill="none" stroke="#a3b6d0" strokeWidth="1.500"><path d="M7 1v3H4M7 4Q2 0 1 4q0 3 3 4" /></svg>
              <Caret size={4} color="#8fa2bd" />
              <QuickLine />
              <svg width="5" height="5" viewBox="0 0 5 5"><path d="M0 0h5v1H0zM0 2h5L2.500 5z" fill="#222" /></svg>
            </QuickBar>
            <TabRow>
              <FileTab>文件</FileTab>
              <RibbonTab $w={35}>开始</RibbonTab>
              <RibbonTab $w={31}>插入</RibbonTab>
              <RibbonTab $w={50}>页面布局</RibbonTab>
              <RibbonTab $w={33}>公式</RibbonTab>
              <RibbonTab $w={33}>数据</RibbonTab>
              <RibbonTab $w={32}>审阅</RibbonTab>
              <RibbonTab $w={34}>视图</RibbonTab>
              <ToolTabsHolder />
            </TabRow>
          </TopLeft>
          <DocTitle>函数.xlsx&nbsp; - Microsoft Excel</DocTitle>
          <TopRight>
            <WinRow $gap={13}>
              <Dash w={11} /><Restore s={12} /><Close s={10} />
            </WinRow>
            <WinRow $gap={8}>
              <svg width="6" height="5" viewBox="0 0 6 5"><path d="M1 4l2-3 2 3z" fill="#fff" stroke="#7a8aa0" /></svg>
              <svg width="9" height="9" viewBox="0 0 9 9"><circle cx="4.500" cy="4.500" r="4.500" fill="#2f66b8" /><path d="M3 3.500q0-1.500 1.500-1.500T6 3.500 4.500 5M4.500 6v1.500" stroke="#fff" fill="none" /></svg>
              <Dash w={7} /><Restore s={8} /><Close s={7} />
            </WinRow>
          </TopRight>
        </TopRow>
      </Header>
      <RibbonBar />
      <FormulaBar>
        <NameBox>
          <NameInput aria-label="名称框" defaultValue="H7" />
          <Caret size={6} />
        </NameBox>
        <FxArea>fx</FxArea>
        <FormulaInput aria-label="编辑栏" defaultValue="行标签" />
        <ExpandButton aria-label="展开"><Caret size={5} color="#33435a" /></ExpandButton>
      </FormulaBar>
      <Main>
        <Book>
          <SheetArea>
            <SheetView><Sheet /></SheetView>
            <ScrollBar>
              <SplitBox />
              <ScrollButton aria-label="向上">
                <svg width="6" height="3" viewBox="0 0 6 3"><path d="M0 3h6L3 0z" fill="#2b4468" /></svg>
              </ScrollButton>
              <Track>
                <Thumb>
                  <svg width="5" height="5" viewBox="0 0 5 5" stroke="#d3e0f0"><path d="M0 .5h5M0 2.500h5M0 4.500h5" /></svg>
                </Thumb>
              </Track>
              <ScrollButton aria-label="向下"><Caret size={6} color="#2b4468" /></ScrollButton>
            </ScrollBar>
          </SheetArea>
          <SheetTabs>
            <SheetNav>
              <NavArrow end /><NavArrow /><NavArrow flip /><NavArrow flip end />
            </SheetNav>
            {sheets.map(([name, w, bg, fg]) => (
              <SheetTab key={name} $w={w} $bg={bg} $fg={fg}><Mixed text={name} size={8} /></SheetTab>
            ))}
            <SheetTab $w={26} $bg="#d3dfef" aria-label="插入工作表">
              <svg width="24" height="11" viewBox="0 0 24 11"><path d="M9 3h8v6l-3 1H9z" fill="#f4f7fb" stroke="#7d8ea6" /><path d="M7 1l3 3M10 1L7 4" stroke="#e8a33a" /></svg>
            </SheetTab>
            <TabSpace />
          </SheetTabs>
        </Book>
        <FieldPane />
      </Main>
      <StatusBar>
        就绪
        <svg width="9" height="9" viewBox="0 0 9 9"><circle cx="4.500" cy="4.500" r="4" fill="#eef3f9" stroke="#74869f" /><path d="M2 4.500h5M4.500 2v5" stroke="#4a5b73" /></svg>
      </StatusBar>
      <Tasks />
    </Page>
    <Tip>求和项:销售额</Tip>
    <Pointer>
      <svg width="16" height="20" viewBox="0 0 16 20"><circle cx="6" cy="6" r="5" fill="#f6e11e" opacity=".8" /><path d="M9 8v9l2-2 1.500 4 1.500-1-1.500-3H15z" fill="#fff" stroke="#333" strokeWidth=".8" /></svg>
    </Pointer>
    <Recorder>
      <RecorderBar>
        <svg width="17" height="14" viewBox="0 0 17 14"><circle cx="7" cy="7" r="6.500" fill="#dceaf6" /><circle cx="7" cy="7" r="4.500" fill="#2f8fd6" /><path d="M11 6l5-3v9l-5-3z" fill="#dceaf6" /></svg>
        <span>录制中... 00:04:26</span>
        <svg width="9" height="9" viewBox="0 0 9 9"><path d="M1 1l7 7M8 1L1 8" stroke="#e8edf2" strokeWidth="1.500" /></svg>
      </RecorderBar>
      <RecorderTools>
        <ToolBit $w={8} $h={1} $c="#5f93bd" />
        <ToolBit $w={9} $h={1} $c="#c9504c" />
        <ToolBit $w={9} $h={3} $c="#c98a70" />
        <ToolBit $w={1} $h={5} $c="#9aa4ae" />
        <ToolBit $w={1} $h={5} $c="#9aa4ae" />
      </RecorderTools>
    </Recorder>
  </>
);

const ToolWrap = styled.div`
  display: flex;
  align-items: flex-end;
`;

function ToolTabsHolder() {
  return (
    <ToolWrap>
      <ToolTabs>
        <ToolTitle>数据透视表工具</ToolTitle>
        <TabRow>
          <ToolTab $w={33} $active>选项</ToolTab>
          <ToolTab $w={33}>设计</ToolTab>
        </TabRow>
      </ToolTabs>
    </ToolWrap>
  );
}

export default App;
